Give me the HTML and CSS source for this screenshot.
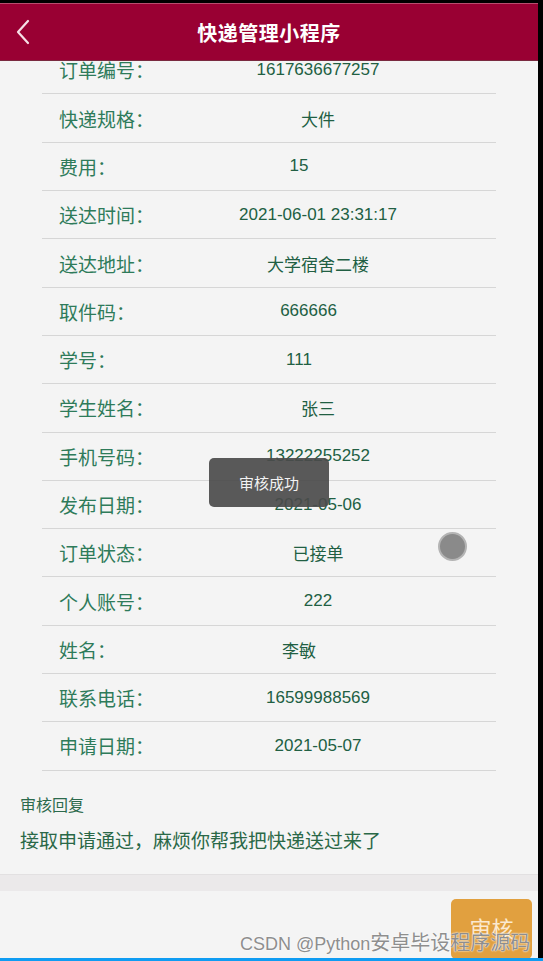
FILE: index.html
```html
<!DOCTYPE html>
<html lang="zh-CN">
<head>
<meta charset="utf-8">
<title>快递管理小程序</title>
<link rel="stylesheet" href="styles.css">
</head>
<body>
<div class="screen">
  <header class="header">
    <svg class="back" width="16" height="26" viewBox="0 0 16 26"><path d="M13 2 L3 13 L13 24" fill="none" stroke="#f6dfe6" stroke-width="2.2" stroke-linecap="round" stroke-linejoin="round"/></svg>
    <h1 class="title">快递管理小程序</h1>
  </header>

  <main class="content">
    <ul class="rows">
      <li class="row"><span class="label">订单编号：</span><span class="value">1617636677257</span></li>
      <li class="row"><span class="label">快递规格：</span><span class="value">大件</span></li>
      <li class="row"><span class="label">费用：</span><span class="value">15</span></li>
      <li class="row"><span class="label">送达时间：</span><span class="value">2021-06-01 23:31:17</span></li>
      <li class="row"><span class="label">送达地址：</span><span class="value">大学宿舍二楼</span></li>
      <li class="row"><span class="label">取件码：</span><span class="value">666666</span></li>
      <li class="row"><span class="label">学号：</span><span class="value">111</span></li>
      <li class="row"><span class="label">学生姓名：</span><span class="value">张三</span></li>
      <li class="row"><span class="label">手机号码：</span><span class="value">13222255252</span></li>
      <li class="row"><span class="label">发布日期：</span><span class="value">2021-05-06</span></li>
      <li class="row"><span class="label">订单状态：</span><span class="value">已接单</span></li>
      <li class="row"><span class="label">个人账号：</span><span class="value">222</span></li>
      <li class="row"><span class="label">姓名：</span><span class="value">李敏</span></li>
      <li class="row"><span class="label">联系电话：</span><span class="value">16599988569</span></li>
      <li class="row"><span class="label">申请日期：</span><span class="value">2021-05-07</span></li>
    </ul>

    <section class="reply">
      <div class="reply-title">审核回复</div>
      <div class="reply-text">接取申请通过，麻烦你帮我把快递送过来了</div>
    </section>

    <div class="band"></div>

    <footer class="footer">
      <button class="audit-btn">审核</button>
    </footer>
  </main>

  <div class="toast">审核成功</div>
  <div class="float-dot"></div>
  <div class="watermark"><span class="wm-latin">CSDN @Python</span><span class="wm-cjk">安卓毕设程序源码</span></div>
</div>
<div class="bottom-bar"></div>
</body>
</html>
```

FILE: styles.css
```css
* { box-sizing: border-box; }

html, body {
  margin: 0;
  padding: 0;
  background: #000;
  font-family: "Liberation Sans", "Noto Sans CJK SC", sans-serif;
}

body {
  width: 543px;
  height: 961px;
  overflow: hidden;
  padding-top: 3px;
}

.screen {
  position: relative;
  width: 538px;
  height: 955px;
  background: #f4f4f4;
  overflow: hidden;
}

.header {
  position: absolute;
  top: 0;
  left: 0;
  right: 0;
  height: 58px;
  background: #990033;
  border-top: 1px solid #b84d6e;
  border-bottom: 1px solid #7a2a40;
  display: flex;
  align-items: center;
  justify-content: center;
  z-index: 5;
}

.back {
  position: absolute;
  left: 15px;
  top: 15px;
}

.title {
  margin: 0;
  color: #fff;
  font-size: 20px;
  font-weight: bold;
  font-family: "Noto Sans CJK SC", sans-serif;
  letter-spacing: 0.5px;
}

.content {
  padding-top: 43.2px;
}

.rows {
  list-style: none;
  margin: 0 42px;
  padding: 0;
}

.row {
  display: flex;
  align-items: center;
  height: 48.3px;
  padding-left: 17px;
  padding-right: 14px;
  border-bottom: 1px solid #d6d6d6;
}

.label {
  font-size: 19px;
  color: #2e7b5a;
  font-family: "Liberation Sans", "Noto Sans CJK SC", sans-serif;
}

.value {
  flex: 1;
  text-align: center;
  font-size: 17px;
  color: #215f43;
}

.reply {
  padding: 23px 20px 19px;
}

.reply-title {
  font-size: 16px;
  line-height: 24px;
  color: #2c6a4c;
}

.reply-text {
  margin-top: 11px;
  font-size: 19px;
  line-height: 26px;
  color: #2a6847;
}

.band {
  height: 17px;
  background: #ebe9ea;
  border-top: 1px solid #e2e0e1;
}

.footer {
  display: flex;
  justify-content: flex-end;
  padding: 8px 6px 0 0;
}

.audit-btn {
  width: 81px;
  height: 60px;
  border: none;
  border-radius: 5px;
  background: #e1a03f;
  color: #fbe9cf;
  font-size: 22px;
  font-family: "Noto Sans CJK SC", sans-serif;
  padding: 0 0 4px;
}

.toast {
  position: absolute;
  left: 209px;
  top: 455px;
  width: 120px;
  height: 49px;
  border-radius: 5px;
  background: rgba(75, 75, 75, 0.92);
  color: #f2f2f2;
  font-size: 15px;
  display: flex;
  align-items: center;
  justify-content: center;
  z-index: 6;
}

.float-dot {
  position: absolute;
  left: 438px;
  top: 529px;
  width: 29px;
  height: 29px;
  border-radius: 50%;
  background: #8a8a8a;
  border: 2px solid #b4b4b4;
}

.watermark {
  position: absolute;
  left: 240px;
  top: 924px;
  color: #8e8e8e;
  white-space: nowrap;
  text-shadow: 0 0 2px #fff, 0 0 1px #fff;
  z-index: 7;
}

.wm-latin {
  font-size: 18px;
  font-family: "Liberation Sans", sans-serif;
}

.wm-cjk {
  font-size: 20px;
  font-family: "Noto Sans CJK SC", sans-serif;
}

.bottom-bar {
  height: 3px;
  background: #0f9cf2;
}
```
